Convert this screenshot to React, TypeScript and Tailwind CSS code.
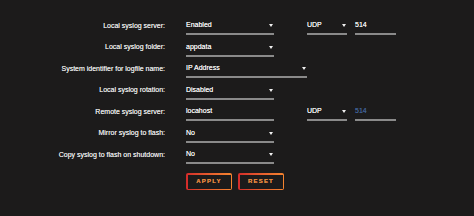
import React from "react";

const font = { fontFamily: '"Liberation Sans", Arial, sans-serif' };

function Arrow() {
  return (
    <span className="ml-auto mr-[1px] w-0 h-0 border-l-[2px] border-r-[2px] border-t-[3px] border-l-transparent border-r-transparent border-t-[#f0f0f0]" />
  );
}

function Field({
  value,
  width,
  arrow = true,
  placeholder = false,
  className = "",
}: {
  value: string;
  width: string;
  arrow?: boolean;
  placeholder?: boolean;
  className?: string;
}) {
  return (
    <div
      className={`flex items-center h-[16px] pb-[1px] border-b-2 border-[#8a8a8a] ${width} ${className}`}
    >
      <span className={placeholder ? "text-[#3f5f94]" : "text-[#f0f0f0]"}>{value}</span>
      {arrow && <Arrow />}
    </div>
  );
}

function Row({ label, children }: { label: string; children: React.ReactNode }) {
  return (
    <div className="flex items-start h-[21.5px]">
      <div className="w-[165px] h-[14px] flex items-center justify-end text-[#e2e2e2]">{label}</div>
      <div className="ml-[21px] flex items-start">{children}</div>
    </div>
  );
}

function Button({ children }: { children: React.ReactNode }) {
  return (
    <div className="p-[1.5px] rounded-[2px] bg-gradient-to-r from-[#d42a2a] to-[#f5842f]">
      <div className="w-[43px] h-[14px] bg-[#1c1b1b] flex items-center justify-center text-[6px] font-bold tracking-[1.2px] text-[#e4873f]">
        {children}
      </div>
    </div>
  );
}

export default function App() {
  return (
    <div
      className="w-[474px] h-[216px] bg-[#1c1b1b] pt-[19px] text-[7px] overflow-hidden [text-shadow:0_0_0.3px_currentColor]"
      style={font}
    >
      <Row label="Local syslog server:">
        <Field value="Enabled" width="w-[88px]" />
        <Field value="UDP" width="w-[40px]" className="ml-[33px]" />
        <Field value="514" width="w-[41px]" arrow={false} className="ml-[8px]" />
      </Row>
      <Row label="Local syslog folder:">
        <Field value="appdata" width="w-[88px]" />
      </Row>
      <Row label="System identifier for logfile name:">
        <Field value="IP Address" width="w-[121px]" />
      </Row>
      <Row label="Local syslog rotation:">
        <Field value="Disabled" width="w-[88px]" />
      </Row>
      <Row label="Remote syslog server:">
        <Field value="locahost" width="w-[88px]" arrow={false} />
        <Field value="UDP" width="w-[40px]" className="ml-[33px]" />
        <Field value="514" width="w-[41px]" arrow={false} placeholder className="ml-[8px]" />
      </Row>
      <Row label="Mirror syslog to flash:">
        <Field value="No" width="w-[88px]" />
      </Row>
      <Row label="Copy syslog to flash on shutdown:">
        <Field value="No" width="w-[88px]" />
      </Row>
      <div className="flex gap-[6px] ml-[186px] mt-[3.5px]">
        <Button>APPLY</Button>
        <Button>RESET</Button>
      </div>
    </div>
  );
}
